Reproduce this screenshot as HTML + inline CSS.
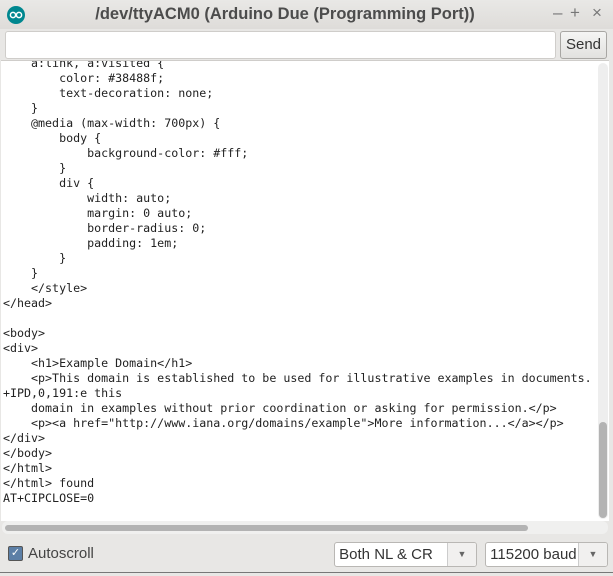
<!DOCTYPE html><html><head><style>
body{margin:0;width:613px;height:575px;background:#e8e7e5;font-family:"Liberation Sans",sans-serif;position:relative;overflow:hidden}
.t{position:absolute;left:0;top:0;width:613px;height:29px;background:linear-gradient(#e9e8e6,#dedcd9);}
.title{position:absolute;left:0;width:570px;top:5px;text-align:center;font-size:16.5px;font-weight:bold;color:#4c4c4c}
.logo{position:absolute;left:7px;top:6px;width:18px;height:18px;border-radius:50%;background:#00878f}
.ctl{position:absolute;top:3px;font-size:17px;color:#777}
.in{position:absolute;left:5px;top:31px;width:549px;height:26px;background:#fff;border:1px solid #cfcdca;border-radius:3px}
.send{position:absolute;left:560px;top:31px;width:45px;height:26px;border:1px solid #a8a6a3;border-radius:3px;background:linear-gradient(#f5f5f4,#e2e1df);font-size:15px;color:#333;text-align:center;line-height:26px}
.ta{position:absolute;left:1px;top:60px;width:608px;height:460px;background:#fff;overflow:hidden;border-top:1px solid #cfcdca}
pre{position:absolute;left:2px;top:-5px;margin:0;font-family:"DejaVu Sans Mono","Liberation Mono",monospace;font-size:11.65px;line-height:15px;color:#222}
.vs{position:absolute;left:597px;top:2px;width:10px;height:456px;background:#eee;border-radius:5px}
.vt{position:absolute;left:598px;top:361px;width:8px;height:96px;background:#b3b3b3;border-radius:4px}
.hs{position:absolute;left:2px;top:521px;width:606px;height:13px;background:#f0f0ef;border-radius:6px}
.ht{position:absolute;left:5px;top:525px;width:523px;height:6px;background:#b3b3b3;border-radius:3px}
.cb{position:absolute;left:8px;top:546px;width:13px;height:13px;background:#5c7fa6;border:1px solid #555;border-radius:2px;color:#fff;font-size:11px;line-height:13px;text-align:center}
.lbl{position:absolute;left:28px;top:545px;font-size:15px;color:#444}
.dd{position:absolute;top:542px;height:23px;background:#fff;border:1px solid #b9b7b4;border-radius:3px;font-size:15px;color:#333;line-height:23px;overflow:hidden}
.dd span{position:absolute;right:0;top:0;width:28px;height:23px;border-left:1px solid #ccc;background:#f1f0ef;text-align:center;font-size:9px;color:#666}
.bl{position:absolute;left:0;top:572px;width:613px;height:3px;border-top:1px solid #777;background:#e8e7e5}
</style></head><body>
<div class="t"><div class="logo"><svg width="18" height="18"><circle cx="6" cy="9" r="2.6" fill="none" stroke="#fff" stroke-width="1.5"/><circle cx="12" cy="9" r="2.6" fill="none" stroke="#fff" stroke-width="1.5"/></svg></div>
<div class="title">/dev/ttyACM0 (Arduino Due (Programming Port))</div>
<div class="ctl" style="left:553px">–</div><div class="ctl" style="left:570px">+</div><div class="ctl" style="left:592px">×</div></div>
<div class="in"></div><div class="send">Send</div>
<div class="ta"><pre>    a:link, a:visited {
        color: #38488f;
        text-decoration: none;
    }
    @media (max-width: 700px) {
        body {
            background-color: #fff;
        }
        div {
            width: auto;
            margin: 0 auto;
            border-radius: 0;
            padding: 1em;
        }
    }
    &lt;/style&gt;
&lt;/head&gt;

&lt;body&gt;
&lt;div&gt;
    &lt;h1&gt;Example Domain&lt;/h1&gt;
    &lt;p&gt;This domain is established to be used for illustrative examples in documents.
+IPD,0,191:e this
    domain in examples without prior coordination or asking for permission.&lt;/p&gt;
    &lt;p&gt;&lt;a href="http://www.iana.org/domains/example"&gt;More information...&lt;/a&gt;&lt;/p&gt;
&lt;/div&gt;
&lt;/body&gt;
&lt;/html&gt;
&lt;/html&gt; found
AT+CIPCLOSE=0</pre><div class="vs"></div><div class="vt"></div></div>
<div class="hs"></div><div class="ht"></div>
<div class="cb">✓</div><div class="lbl">Autoscroll</div>
<div class="dd" style="left:334px;width:141px">&nbsp;Both NL &amp; CR<span>▼</span></div>
<div class="dd" style="left:485px;width:121px">&nbsp;115200 baud<span>▼</span></div>
<div class="bl"></div>
</body></html>
